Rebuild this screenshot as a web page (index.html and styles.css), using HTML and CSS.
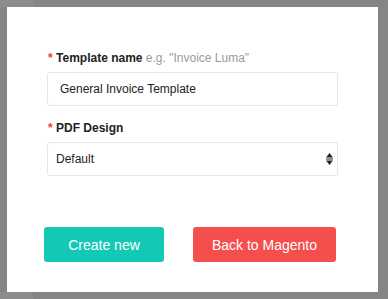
FILE: index.html
```html
<!DOCTYPE html>
<html>
<head>
<meta charset="utf-8">
<link rel="stylesheet" href="styles.css">
</head>
<body>
<div class="backdrop">
  <div class="strip strip-top"></div>
  <div class="panel">
    <form class="form">
      <label class="label"><span class="req">*</span> <b>Template name</b> <span class="hint">e.g. "Invoice Luma"</span></label>
      <input class="input" type="text" value="General Invoice Template">
      <label class="label label-2"><span class="req">*</span> <b>PDF Design</b></label>
      <div class="select-wrap">
        <select class="select"><option>Default</option></select>
        <svg class="arrows" width="7" height="12" viewBox="0 0 7 12"><path d="M3.5 0 L7 4.5 L0 4.5 Z" fill="#222"/><rect x="0" y="5.5" width="7" height="1" fill="#222"/><path d="M0 7.5 L7 7.5 L3.5 12 Z" fill="#222"/></svg>
      </div>
      <div class="actions">
        <button type="button" class="btn btn-create">Create new</button>
        <button type="button" class="btn btn-back">Back to Magento</button>
      </div>
    </form>
  </div>
  <div class="strip strip-bottom"></div>
</div>
</body>
</html>
```
FILE: styles.css
```css
html, body {
  margin: 0;
  padding: 0;
  background: #858585;
  font-family: "Liberation Sans", Arial, sans-serif;
}
.backdrop {
  position: relative;
  width: 388px;
  height: 299px;
  padding: 7px;
  box-sizing: border-box;
}
.strip {
  position: absolute;
  left: 0;
  width: 33px;
  height: 7px;
  background: #8c8c8c;
}
.strip-top { top: 0; }
.strip-bottom { bottom: 0; }
.panel {
  width: 371px;
  height: 285px;
  background: #fff;
  box-sizing: border-box;
  padding: 44px 0 0 40px;
}
.form {
  display: flex;
  flex-direction: column;
  width: 291px;
}
.label {
  display: block;
  font-size: 12px;
  line-height: 14px;
  color: #222;
  margin-left: 1px;
}
.label b { font-weight: bold; }
.req { color: #e8403a; font-weight: bold; }
.hint { color: #9a9a9a; }
.label-2 { margin-top: 15px; }
.input, .select {
  box-sizing: border-box;
  width: 291px;
  height: 34px;
  margin-top: 7px;
  border: 1px solid #e6e6e6;
  border-radius: 3px;
  background: #fff;
  font-family: "Liberation Sans", Arial, sans-serif;
  font-size: 12px;
  color: #222;
  outline: none;
}
.input { padding: 0 12px; }
.select-wrap { position: relative; }
.select {
  -webkit-appearance: none;
  appearance: none;
  padding: 0 8px;
  display: block;
}
.arrows {
  position: absolute;
  right: 5px;
  top: 18px;
}
.actions {
  display: flex;
  margin-top: 51px;
  margin-left: -3px;
  gap: 29px;
}
.btn {
  height: 35px;
  border: 0;
  border-radius: 3px;
  color: #fff;
  font-family: "Liberation Sans", Arial, sans-serif;
  font-size: 14px;
  padding: 0;
}
.btn-create { width: 120px; background: #13c8b5; }
.btn-back { width: 143px; background: #f44e4d; }
```
